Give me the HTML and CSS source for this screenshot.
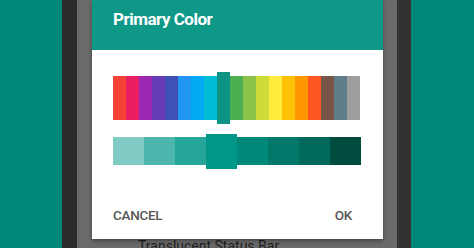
FILE: index.html
```html
<!DOCTYPE html>
<html>
<head>
<meta charset="utf-8">
<link rel="stylesheet" href="styles.css">
</head>
<body>
<div class="stage">
  <div class="side side-left"></div>
  <div class="bezel bezel-left"></div>
  <div class="screen">
    <div class="dialog">
      <div class="dialog-header">Primary Color</div>
      <div class="dialog-body">
        <div class="rainbow">
          <span class="cell" style="background:#F44336"></span>
          <span class="cell" style="background:#E91E63"></span>
          <span class="cell" style="background:#9C27B0"></span>
          <span class="cell" style="background:#673AB7"></span>
          <span class="cell" style="background:#3F51B5"></span>
          <span class="cell" style="background:#2196F3"></span>
          <span class="cell" style="background:#03A9F4"></span>
          <span class="cell" style="background:#00BCD4"></span>
          <span class="cell selected" style="background:#009688"></span>
          <span class="cell" style="background:#4CAF50"></span>
          <span class="cell" style="background:#8BC34A"></span>
          <span class="cell" style="background:#CDDC39"></span>
          <span class="cell" style="background:#FFEB3B"></span>
          <span class="cell" style="background:#FFC107"></span>
          <span class="cell" style="background:#FF9800"></span>
          <span class="cell" style="background:#FF5722"></span>
          <span class="cell" style="background:#795548"></span>
          <span class="cell" style="background:#607D8B"></span>
          <span class="cell" style="background:#9E9E9E"></span>
        </div>
        <div class="shades">
          <span class="shade" style="background:#80CBC4"></span>
          <span class="shade" style="background:#4DB6AC"></span>
          <span class="shade" style="background:#26A69A"></span>
          <span class="shade selected" style="background:#009688"></span>
          <span class="shade" style="background:#00897B"></span>
          <span class="shade" style="background:#00796B"></span>
          <span class="shade" style="background:#00695C"></span>
          <span class="shade" style="background:#004D40"></span>
        </div>
        <div class="actions">
          <span class="btn">CANCEL</span>
          <span class="btn">OK</span>
        </div>
      </div>
    </div>
    <div class="under-text">Translucent Status Bar</div>
  </div>
  <div class="bezel bezel-right"></div>
  <div class="side side-right"></div>
</div>
</body>
</html>
```
FILE: styles.css
```css
html, body {
  margin: 0;
  padding: 0;
}
body {
  width: 474px;
  height: 248px;
  overflow: hidden;
  background: #00897B;
  font-family: Roboto, "Liberation Sans", sans-serif;
}
.stage {
  display: flex;
  height: 248px;
}
.side {
  background: #00897B;
}
.side-left {
  width: 62px;
}
.side-right {
  flex: 1;
}
.bezel {
  background: #2b2b2b;
}
.bezel-left {
  width: 15px;
}
.bezel-right {
  width: 14px;
  background: #333132;
}
.screen {
  width: 320px;
  background: #6a6a6a;
  display: flex;
  flex-direction: column;
  padding-left: 15px;
  box-sizing: border-box;
  overflow: hidden;
}
.dialog {
  flex: none;
  width: 291px;
  height: 239px;
  background: #ffffff;
  box-shadow: 0 2px 4px rgba(0,0,0,0.35);
  display: flex;
  flex-direction: column;
  position: relative;
  z-index: 1;
}
.dialog-header {
  height: 50px;
  background: #0f9888;
  color: #ffffff;
  font-weight: 700;
  font-size: 17px;
  letter-spacing: -0.5px;
  line-height: 38px;
  padding-left: 21px;
  box-sizing: border-box;
}
.dialog-body {
  padding: 0 22px 0 21px;
  display: flex;
  flex-direction: column;
  flex: 1;
}
.rainbow {
  margin-top: 26px;
  height: 44px;
  display: flex;
  align-items: center;
}
.cell {
  width: 13px;
  height: 44px;
  flex: none;
}
.cell.selected {
  height: 52px;
  background: #0d9484 !important;
}
.shades {
  margin-top: 17px;
  height: 28px;
  display: flex;
  align-items: center;
}
.shade {
  width: 31px;
  height: 28px;
  flex: none;
}
.shade.selected {
  height: 35px;
}
.actions {
  margin-top: 42px;
  display: flex;
  justify-content: space-between;
  padding-right: 9px;
}
.btn {
  font-size: 13.5px;
  font-weight: 500;
  color: #555555;
  line-height: 16px;
  letter-spacing: -0.3px;
}
.under-text {
  flex: none;
  margin-top: -1px;
  padding-left: 46px;
  font-size: 14px;
  color: #1e1e1e;
  line-height: 16px;
}
```
